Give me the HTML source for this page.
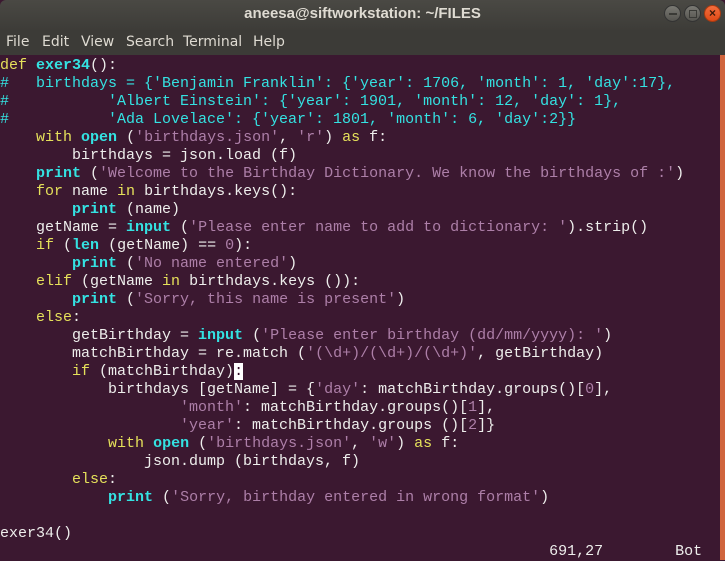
<!DOCTYPE html>
<html><head><meta charset="utf-8"><style>
*{margin:0;padding:0;box-sizing:border-box}
body{width:725px;height:560px;overflow:hidden;background:#3b1830;font-family:"Liberation Sans",sans-serif;position:relative}
#title{position:absolute;left:0;top:0;width:725px;height:30px;background:linear-gradient(#4a4944,#3d3c38);border-radius:6px 6px 0 0;color:#dfdbd2;font-weight:bold;font-size:15px;text-align:center;line-height:28px}
#menu{position:absolute;left:0;top:30px;width:725px;height:25px;background:#3c3b37;color:#dfdbd2;font-size:14px;line-height:25px;font-family:"DejaVu Sans",sans-serif}
#menu span{position:absolute;top:0}
.btn{position:absolute;top:5px;width:17px;height:17px;border-radius:50%;background:linear-gradient(#7a7973,#55544f);border:1px solid #333}
#term{position:absolute;left:0;top:57px;width:720px;height:503px;background:#3b1830}
#bg{position:absolute;left:0;top:55px;width:720px;height:505px;background:#3b1830}
#sb{position:absolute;left:720px;top:55px;width:5px;height:505px;background:#d0643c}
pre{font-family:"Liberation Mono",monospace;font-size:15px;line-height:18px;color:#eeeeec;letter-spacing:0}
.k{color:#e5e05a}.f{color:#34e2e2;font-weight:bold}.c{color:#34e2e2}.s{color:#ad7fa8}
.cur{background:#fff;color:#300a24}
</style></head><body>
<div id="title">aneesa@siftworkstation: ~/FILES</div>
<div class="btn" style="left:664px"><div style="position:absolute;left:4px;top:7px;width:8px;height:1.5px;background:#3a3a36"></div></div>
<div class="btn" style="left:684px"><div style="position:absolute;left:4px;top:4px;width:8px;height:8px;border:1.5px solid #3a3a36"></div></div>
<div class="btn" style="left:704px;background:linear-gradient(#f26d3d,#df4a16);border-color:#a83a10;color:#3a1a0a;font-size:12px;line-height:15px;text-align:center;font-weight:bold">×</div>
<div id="menu"><span style="left:6px">File</span><span style="left:42px">Edit</span><span style="left:81px">View</span><span style="left:126px">Search</span><span style="left:183px">Terminal</span><span style="left:253px">Help</span></div>
<div id="bg"></div>
<div id="term"><pre><span class="k">def</span> <span class="f">exer34</span>():
<span class="c">#   birthdays = {'Benjamin Franklin': {'year': 1706, 'month': 1, 'day':17},</span>
<span class="c">#           'Albert Einstein': {'year': 1901, 'month': 12, 'day': 1},</span>
<span class="c">#           'Ada Lovelace': {'year': 1801, 'month': 6, 'day':2}}</span>
    <span class="k">with</span> <span class="f">open</span> (<span class="s">'birthdays.json'</span>, <span class="s">'r'</span>) <span class="k">as</span> f:
        birthdays = json.load (f)
    <span class="f">print</span> (<span class="s">'Welcome to the Birthday Dictionary. We know the birthdays of :'</span>)
    <span class="k">for</span> name <span class="k">in</span> birthdays.keys():
        <span class="f">print</span> (name)
    getName = <span class="f">input</span> (<span class="s">'Please enter name to add to dictionary: '</span>).strip()
    <span class="k">if</span> (<span class="f">len</span> (getName) == <span class="s">0</span>):
        <span class="f">print</span> (<span class="s">'No name entered'</span>)
    <span class="k">elif</span> (getName <span class="k">in</span> birthdays.keys ()):
        <span class="f">print</span> (<span class="s">'Sorry, this name is present'</span>)
    <span class="k">else</span>:
        getBirthday = <span class="f">input</span> (<span class="s">'Please enter birthday (dd/mm/yyyy): '</span>)
        matchBirthday = re.match (<span class="s">'(\d+)/(\d+)/(\d+)'</span>, getBirthday)
        <span class="k">if</span> (matchBirthday)<span class="cur">:</span>
            birthdays [getName] = {<span class="s">'day'</span>: matchBirthday.groups()[<span class="s">0</span>],
                    <span class="s">'month'</span>: matchBirthday.groups()[<span class="s">1</span>],
                    <span class="s">'year'</span>: matchBirthday.groups ()[<span class="s">2</span>]}
            <span class="k">with</span> <span class="f">open</span> (<span class="s">'birthdays.json'</span>, <span class="s">'w'</span>) <span class="k">as</span> f:
                json.dump (birthdays, f)
        <span class="k">else</span>:
            <span class="f">print</span> (<span class="s">'Sorry, birthday entered in wrong format'</span>)

exer34()
                                                             691,27        Bot</pre></div>
<div id="sb"></div>
</body></html>
